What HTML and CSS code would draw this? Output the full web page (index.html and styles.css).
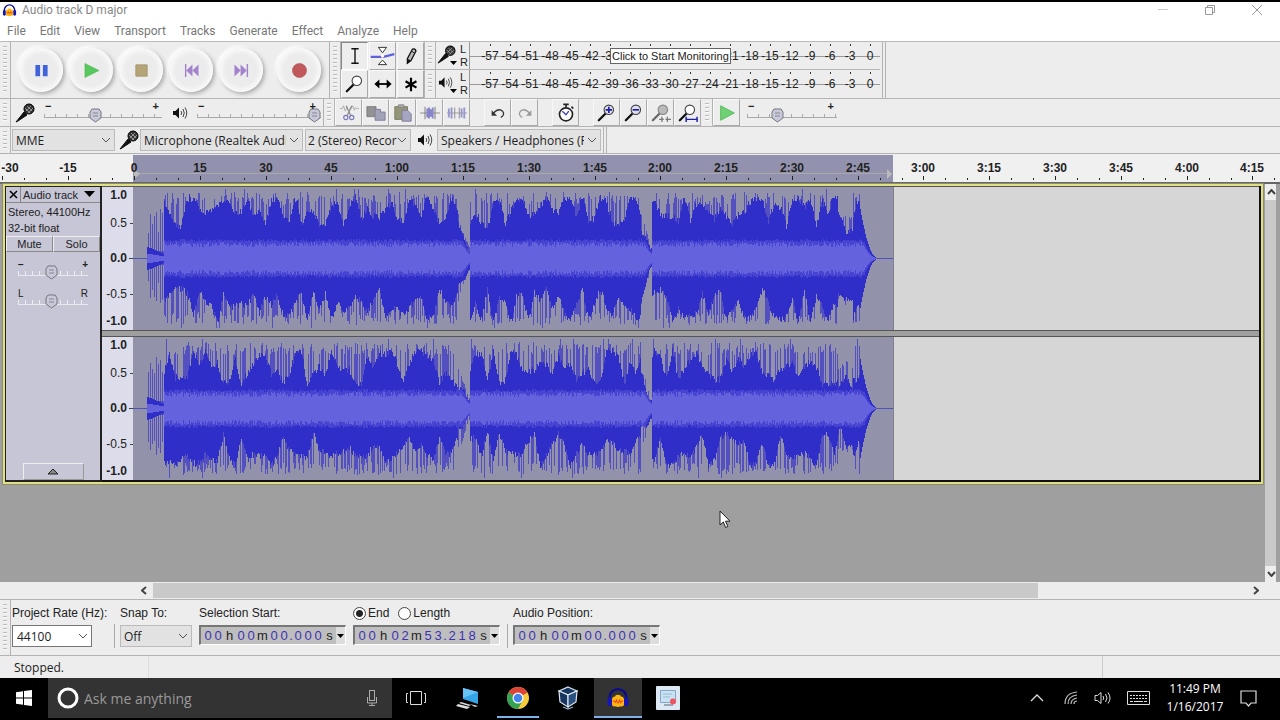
FILE: index.html
```html
<!DOCTYPE html>
<html lang="en">
<head>
    <meta charset="UTF-8">
    <meta name="viewport" content="width=device-width, initial-scale=1.0">
    <title>Audio track D major</title>
    <link rel="stylesheet" href="styles.css">
</head>
<body>
    <svg class="sprite" aria-hidden="true">
        <symbol id="mic" viewBox="0 0 20 20">
            <path d="M1 19 L9 9 L12 12 L3 18 Z" fill="#111" stroke="#111"/>
            <circle cx="14" cy="6" r="5" fill="#333" stroke="#000"/>
            <path d="M10 5l5 5M12 3l5 5M11 8l5-5M13 10l5-5" stroke="#aaa" stroke-width="0.8"/>
        </symbol>
        <symbol id="speaker" viewBox="0 0 16 16">
            <path d="M1 6h2.500l3.500-3.500v11L3.500 10H1z" fill="#111"/>
            <path d="M9 6q1.500 2 0 4M11 4q2.500 4 0 8M13 2.500q3.500 5.500 0 11" fill="none" stroke="#444"/>
        </symbol>
        <symbol id="lens" viewBox="0 0 22 22">
            <path d="M2 19l8-8" stroke="#111" stroke-width="2.500" stroke-linecap="round"/>
            <circle cx="13" cy="7.500" r="5.200" stroke="#444" stroke-width="1.200"/>
        </symbol>
        <symbol id="logo" viewBox="0 0 32 32">
            <path d="M5 20V15a11 11 0 0 1 22 0v5" fill="none" stroke="#0b0b8c" stroke-width="3"/>
            <path d="M8 25V17q1-3 4-3 1-3 4-2 3-1 4 2 3 0 4 3v8q-1 3-4 2-4 2-8 0-3 1-4-2z" fill="#fdb515"/>
            <path d="M8 20l3-1 1 2 2-4 2 5 2-5 2 4 1-2 3 1-3 1-1 3-2-3-2 3-2-3-2 2-1-2z" fill="#ef4a1a"/>
            <rect x="2" y="15" width="6" height="12" rx="3" fill="#1616b4"/>
            <rect x="24" y="15" width="6" height="12" rx="3" fill="#1616b4"/>
        </symbol>
    </svg>

    <div class="window">
        <header class="titlebar">
            <svg class="app-icon"><use href="#logo"/></svg>
            <h1>Audio track D major</h1>
            <div class="window-buttons">
                <button aria-label="Minimize"><svg width="12" height="12"><path d="M1 5.500h10" stroke="#ccc"/></svg></button>
                <button aria-label="Restore"><svg width="12" height="12" fill="none" stroke="#999"><path d="M1.500 3.500h7v7h-7zM3.500 3.500v-2h7v7h-2"/></svg></button>
                <button aria-label="Close"><svg width="12" height="12"><path d="M1 1l10 10M11 1L1 11" stroke="#999"/></svg></button>
            </div>
        </header>

        <nav class="menubar">
            <a href="#">File</a>
            <a href="#">Edit</a>
            <a href="#">View</a>
            <a href="#">Transport</a>
            <a href="#">Tracks</a>
            <a href="#">Generate</a>
            <a href="#">Effect</a>
            <a href="#">Analyze</a>
            <a href="#">Help</a>
        </nav>

        <!-- transport, tools, meters -->
        <div class="toolbar-row">
            <div class="grip"></div>
            <div class="transport">
                <button class="round" aria-label="Pause"><svg viewBox="0 0 16 16"><path d="M1.500 2h5v12h-5zM9.500 2h5v12h-5z" fill="#3f62dd"/></svg></button>
                <button class="round" aria-label="Play"><svg viewBox="0 0 16 16"><path d="M1 0.500l15 7.500-15 7.500z" fill="#57c95c" stroke="#46a84b" stroke-width="0.500"/></svg></button>
                <button class="round" aria-label="Stop"><svg viewBox="0 0 16 16"><path d="M2 2h12v12H2z" fill="#b5a476" stroke="#a3946c"/></svg></button>
                <button class="round" aria-label="Skip to start"><svg viewBox="0 0 16 16"><path d="M1 1h1.500v14H1zM9 1.500v13L2.500 8zM15.500 1.500v13L9 8z" fill="#a283cc"/></svg></button>
                <button class="round" aria-label="Skip to end"><svg viewBox="0 0 16 16"><path d="M13.500 1H15v14h-1.500zM0.500 1.500v13L7 8zM7 1.500v13L13.500 8z" fill="#a283cc"/></svg></button>
                <button class="round record" aria-label="Record"><svg viewBox="0 0 16 16"><circle cx="8" cy="8" r="7.500" fill="#c1595c" stroke="#a94a4e" stroke-width="0.600"/></svg></button>
            </div>
            <div class="grip"></div>
            <div class="tools">
                <button class="cell pressed" aria-label="Selection tool"><svg viewBox="0 0 22 22"><path d="M7 3h8M7 19h8M11 3v16" stroke="#111" stroke-width="1.500"/></svg></button>
                <button class="cell" aria-label="Envelope tool"><svg class="wide" viewBox="0 0 26 22"><path d="M0 12h14l12-3" fill="none" stroke="#6060dd" stroke-width="2.600"/><path d="M8.500 1.500h9L13 7.500zM8.500 20.500h9L13 15.500z" fill="#fff" stroke="#222"/><circle cx="13" cy="11" r="1.800" fill="#fff"/></svg></button>
                <button class="cell" aria-label="Draw tool"><svg viewBox="0 0 22 22"><path d="M7 19v-5L12.500 3.500q3-1 4 2L11 16z" fill="#bbb" stroke="#111" stroke-width="1.400"/><path d="M7 19l1-4 2 1zM12 6l3 2" fill="#111" stroke="#111"/></svg></button>
                <button class="cell" aria-label="Zoom tool"><svg viewBox="0 0 22 22" fill="#fff"><use href="#lens"/></svg></button>
                <button class="cell" aria-label="Time shift tool"><svg viewBox="0 0 22 22"><path d="M5 11h12" stroke="#000" stroke-width="2"/><path d="M7 6v10l-5.500-5zM15 6v10l5.500-5z"/></svg></button>
                <button class="cell" aria-label="Multi tool"><svg viewBox="0 0 22 22"><path d="M11 4v15M5 8l12 7M17 8L5 15" stroke="#000" stroke-width="2.400"/></svg></button>
            </div>
            <div class="meters">
                <div class="meter">
                    <div class="grip"></div>
                    <button class="meter-icon" aria-label="Record meter"><svg width="22" height="22"><use href="#mic" width="19" height="19"/><path d="M13 16h7l-3.500 4z"/></svg></button>
                    <div class="lr"><span>L</span><span>R</span></div>
                    <div class="scale" data-covered="-36 -33 -30 -27 -24"></div>
                    <div class="tooltip">Click to Start Monitoring</div>
                </div>
                <div class="meter">
                    <div class="grip"></div>
                    <button class="meter-icon" aria-label="Playback meter"><svg width="22" height="22"><use href="#speaker" x="1" y="2" width="15" height="15"/><path d="M13 16h7l-3.500 4z"/></svg></button>
                    <div class="lr"><span>L</span><span>R</span></div>
                    <div class="scale"></div>
                </div>
            </div>
            <div class="row-end"></div>
        </div>

        <!-- mixer, edit, transcription -->
        <div class="toolbar-row">
            <div class="grip"></div>
            <div class="mixer">
                <svg class="device-icon" width="20" height="20"><use href="#mic"/></svg>
                <div class="slider">
                    <input type="range" aria-label="Recording volume" min="0" max="100" value="43">
                </div>
                <svg class="device-icon" width="16" height="16"><use href="#speaker"/></svg>
                <div class="slider playback">
                    <input type="range" aria-label="Playback volume" min="0" max="100" value="100">
                </div>
            </div>
            <div class="grip"></div>
            <div class="cells">
                <button class="cell" aria-label="Cut"><svg viewBox="0 0 22 22"><path d="M1 6h3l1-3 2 6 2-5M13 7l2-4 2 5 1-3 1 1h3" fill="none" stroke="#aaa"/><path d="M8 3l5 11M14 3L9 14" stroke="#888" stroke-width="1.300"/><circle cx="7.500" cy="16" r="2.300" fill="none" stroke="#7878c0" stroke-width="1.300"/><circle cx="14" cy="16" r="2.300" fill="none" stroke="#7878c0" stroke-width="1.300"/></svg></button>
                <button class="cell" aria-label="Copy"><svg viewBox="0 0 22 22"><path d="M1 4h10v11H1z" fill="#929292" stroke="#7c7c7c"/><path d="M10 7h6v3h5v9H10z" fill="#a2a2ba" stroke="#7d7d98"/></svg></button>
                <button class="cell" aria-label="Paste"><svg viewBox="0 0 22 22"><path d="M2 4h14v14H2z" fill="#95957a" stroke="#77775c"/><path d="M6 2h6v3H6z" fill="#aaa" stroke="#888"/><path d="M10 8h6l4 4v8H10z" fill="#a6a6c2" stroke="#7d7d98"/></svg></button>
                <button class="cell" aria-label="Trim"><svg viewBox="0 0 22 22"><path d="M0 11h22" stroke="#888"/><path d="M5 4h1v14H5zM16 4h1v14h-1z" fill="#777"/><path d="M7 6h2v-1h2v2h2v-2h2v12h-2v-2h-2v2H9v-1H7z" fill="#8686c8"/></svg></button>
                <button class="cell" aria-label="Silence"><svg viewBox="0 0 22 22"><path d="M0 11h22" stroke="#999"/><path d="M1 6h2v10H1zM4 5h2v12H4zM15 6h2v10h-2zM18 5h2v12h-2z" fill="#9696cc"/><path d="M8.500 5v12M13.500 5v12" stroke="#888"/></svg></button>
            </div>
            <div class="cells">
                <button class="cell" aria-label="Undo"><svg viewBox="0 0 22 22"><path d="M6 11q6-6 10-2 3 4-2 7" fill="none" stroke="#333" stroke-width="1.400"/><path d="M4 8v6h6z" fill="#333"/></svg></button>
                <button class="cell" aria-label="Redo"><svg viewBox="0 0 22 22"><path d="M16 11q-6-6-10-2-3 4 2 7" fill="none" stroke="#999" stroke-width="1.400"/><path d="M18 8v6h-6z" fill="#999"/></svg></button>
            </div>
            <div class="cells">
                <button class="cell" aria-label="Sync lock"><svg viewBox="0 0 22 22"><circle cx="11" cy="12.500" r="7.200" fill="#fff" stroke="#222" stroke-width="1.800"/><path d="M11 5V1M8 1.500h6M17 4l2 2" stroke="#222" stroke-width="1.800"/><path d="M7 9l4 4 3-4" fill="none" stroke="#4040c0" stroke-width="1.500"/></svg></button>
            </div>
            <div class="cells">
                <button class="cell" aria-label="Zoom in"><svg viewBox="0 0 22 22" fill="#dde"><use href="#lens"/><path d="M13 4v7M9.500 7.500h7" stroke="#1c1ca0" stroke-width="1.800"/></svg></button>
                <button class="cell" aria-label="Zoom out"><svg viewBox="0 0 22 22" fill="#dde"><use href="#lens"/><path d="M9.500 7.500h7" stroke="#1c1ca0" stroke-width="1.800"/></svg></button>
                <button class="cell" aria-label="Fit selection"><svg viewBox="0 0 22 22"><g fill="#999" opacity="0.600"><use href="#lens"/></g><path d="M9 18h5M16 18h6M12 15v6M18 15v6" stroke="#777" stroke-width="1.400"/></svg></button>
                <button class="cell" aria-label="Fit project"><svg viewBox="0 0 22 22" fill="#fff"><use href="#lens"/><path d="M9 18h12M9 15v6M21 15v6" stroke="#1c1ca0" stroke-width="1.600"/></svg></button>
            </div>
            <div class="grip"></div>
            <div class="cells">
                <button class="cell" aria-label="Play at speed"><svg viewBox="0 0 22 22"><path d="M4 3l15 8-15 8z" fill="#6fd074" stroke="#57b95c"/></svg></button>
            </div>
            <div class="slider speed">
                <input type="range" aria-label="Playback speed" min="0" max="100" value="31">
            </div>
        </div>

        <!-- devices -->
        <div class="toolbar-row devices">
            <div class="grip"></div>
            <select class="host" aria-label="Audio host"><option>MME</option></select>
            <svg width="20" height="20"><use href="#mic"/></svg>
            <select class="input-device" aria-label="Recording device"><option>Microphone (Realtek Audio)</option></select>
            <select class="channels" aria-label="Recording channels"><option>2 (Stereo) Recor</option></select>
            <svg class="out-icon" width="16" height="16"><use href="#speaker"/></svg>
            <select class="output-device" aria-label="Playback device"><option>Speakers / Headphones (Realtek)</option></select>
            <div class="row-end"></div>
        </div>

        <svg class="timeline" id="timeline"></svg>

        <main class="workspace">
            <section class="tracks">
                <div class="track">
                    <div class="track-info">
                        <div class="track-title">
                            <button class="close-track" aria-label="Close track"><svg width="9" height="9"><path d="M1 1l7 7M8 1L1 8" stroke="#000" stroke-width="1.500"/></svg></button>
                            <button class="track-menu">Audio track <svg width="11" height="7"><path d="M0 0h11L5.500 6z"/></svg></button>
                        </div>
                        <p>Stereo, 44100Hz<br>32-bit float</p>
                        <div class="mute-solo">
                            <button>Mute</button>
                            <button>Solo</button>
                        </div>
                        <div class="knob">
                            <div><b>−</b><b>+</b></div>
                            <input type="range" aria-label="Gain" value="47">
                        </div>
                        <div class="knob">
                            <div><span>L</span><span>R</span></div>
                            <input type="range" aria-label="Pan" value="47">
                        </div>
                        <button class="collapse" aria-label="Collapse track"><svg width="12" height="7"><path d="M1 6l5-5 5 5z" fill="#888" stroke="#222"/></svg></button>
                    </div>
                    <div class="channel-list">
                        <div class="channel">
                            <div class="levels"><b>1.0</b><span>0.5</span><b>0.0</b><span>-0.5</span><b>-1.0</b></div>
                            <svg class="wave" viewBox="0 0 761 143" preserveAspectRatio="none"></svg>
                        </div>
                        <div class="channel">
                            <div class="levels"><b>1.0</b><span>0.5</span><b>0.0</b><span>-0.5</span><b>-1.0</b></div>
                            <svg class="wave" viewBox="0 0 761 143" preserveAspectRatio="none"></svg>
                        </div>
                    </div>
                </div>
            </section>
            <div class="vscroll">
                <button aria-label="Scroll up"><svg width="9" height="6"><path d="M1 5l3.500-4L8 5" fill="none" stroke="#444" stroke-width="2"/></svg></button>
                <div class="thumb"></div>
                <button aria-label="Scroll down"><svg width="9" height="6"><path d="M1 1l3.500 4L8 1" fill="none" stroke="#444" stroke-width="2"/></svg></button>
            </div>
        </main>

        <div class="hscroll">
            <button aria-label="Scroll left"><svg width="6" height="9"><path d="M5 1L1 4.500 5 8" fill="none" stroke="#444" stroke-width="2"/></svg></button>
            <div class="thumb"></div>
            <button class="right" aria-label="Scroll right"><svg width="6" height="9"><path d="M1 1l4 3.500L1 8" fill="none" stroke="#444" stroke-width="2"/></svg></button>
        </div>

        <div class="selection-bar">
            <div class="grip"></div>
            <div class="field rate">
                <label for="rate">Project Rate (Hz):</label>
                <select id="rate"><option>44100</option></select>
            </div>
            <div class="divider"></div>
            <div class="field snap">
                <label for="snap">Snap To:</label>
                <select id="snap"><option>Off</option></select>
            </div>
            <div class="field">
                <span>Selection Start:</span>
                <div class="time" data-time="00h00m00.000s"></div>
            </div>
            <div class="field end">
                <div class="radios">
                    <label><input type="radio" name="range" checked>End</label>
                    <label><input type="radio" name="range">Length</label>
                </div>
                <div class="time" data-time="00h02m53.218s"></div>
            </div>
            <div class="divider"></div>
            <div class="field">
                <span>Audio Position:</span>
                <div class="time" data-time="00h00m00.000s"></div>
            </div>
        </div>

        <footer class="statusbar">
            <span class="state">Stopped.</span>
            <span class="message"></span>
            <span class="rate-info"></span>
        </footer>
    </div>

    <div class="taskbar">
        <button class="start" aria-label="Start"><svg width="16" height="16" fill="#fff"><path d="M0 2.300L7 1.300V7.600H0zM8 1.100L16 0V7.600H8zM0 8.500H7V14.800L0 13.800zM8 8.500H16V16L8 14.900z"/></svg></button>
        <div class="search">
            <svg width="22" height="22"><circle cx="11" cy="11" r="9" fill="none" stroke="#fff" stroke-width="3"/></svg>
            <input type="text" aria-label="Search" placeholder="Ask me anything">
            <svg width="12" height="18" fill="none" stroke="#aaa"><rect x="3.500" y="1.500" width="5" height="10"/><path d="M1.500 8v6h9V8M6 14v3M3 16.500h6"/></svg>
        </div>
        <button class="task view" aria-label="Task view"><svg width="22" height="16" fill="none" stroke="#ddd"><path d="M5.500 1.500h11v13h-11zM3 3.500H1.500v9H3M19 3.500h1.500v9H19"/></svg></button>
        <button class="task" aria-label="Remote desktop"><svg width="24" height="24"><path d="M7 2l15 4v12L7 13z" fill="#35a5e8"/><path d="M7 2l15 4-15 6z" fill="#67c2f5"/><path d="M5 16l10 3-2 1-10-3zM2 18l12 3-3 2-11-3zM14 18l8 2-3 1z" fill="#ddd"/></svg></button>
        <button class="task running" aria-label="Chrome"><svg width="24" height="24" viewBox="0 0 24 24"><circle cx="12" cy="12" r="11" fill="#f8cb3c"/><path d="M12 12L2.500 6.500A11 11 0 0 1 21.500 6.500z" fill="#dc4437"/><path d="M12 12L2.500 6.500A11 11 0 0 0 12 23l5-9z" fill="#31a353"/><circle cx="12" cy="12" r="5.500" fill="#fff"/><circle cx="12" cy="12" r="4.300" fill="#4385f0"/></svg></button>
        <button class="task" aria-label="VirtualBox"><svg width="24" height="24" stroke="#dfe8f2" stroke-width="1.200"><path d="M12 1l9 4-9 4-9-4z" fill="#16355f"/><path d="M3 5l9 4v12l-8-5z" fill="#16355f"/><path d="M21 5l-9 4v12l8-5z" fill="#284f7e"/><path d="M7 21l5 2 5-2" fill="none" stroke="#8faed0"/></svg></button>
        <button class="task active" aria-label="Audacity"><svg width="24" height="24"><use href="#logo"/></svg></button>
        <button class="task" aria-label="Screen recorder"><svg width="24" height="24"><rect width="24" height="24" rx="1" fill="#dce8f3"/><path d="M4.500 4.500h15v12h-15z" fill="#c7e2f4" stroke="#87a6bd"/><path d="M7 8h9M7 11h7" stroke="#9ab8cc"/><path d="M8 19h9" stroke="#567"/><circle cx="17" cy="15.500" r="3" fill="#ef5361"/></svg></button>
        <div class="tray">
            <button class="more" aria-label="Show hidden icons"><svg width="14" height="8"><path d="M1 7l6-6 6 6" fill="none" stroke="#ddd" stroke-width="1.300"/></svg></button>
            <button aria-label="Network"><svg width="14" height="14" fill="none" stroke="#bbb" stroke-width="1.200"><path d="M1 13Q1 2 13 1M4 13Q4 5 13 4M7 13Q7 8 13 7M10 13Q10 10 13 10"/></svg></button>
            <button aria-label="Volume"><svg width="17" height="14" fill="none" stroke="#ddd"><path d="M1 4.500h2.500L7 1.500v11L3.500 9.500H1zM9 5q1.500 2 0 4M11.500 3q3 4 0 8M14 1.500q4 5.500 0 11"/></svg></button>
            <button aria-label="Touch keyboard"><svg width="23" height="14" fill="none" stroke="#ddd"><path d="M0.500 0.500h22v13h-22z"/><path d="M3 4.500h17M3 7.500h17" stroke-dasharray="2 1"/><path d="M3 10.500h3M7 10.500h9M17 10.500h3"/></svg></button>
            <div class="clock"><span>11:49 PM</span><span>1/16/2017</span></div>
            <button aria-label="Notifications"><svg width="17" height="17" fill="none" stroke="#ddd" stroke-width="1.200"><path d="M1 1h15v12h-5l-2.500 3L6 13H1z"/></svg></button>
        </div>
    </div>

    <svg class="cursor" width="13" height="19"><path d="M1 1v14l3.300-3 2.300 5.500 2.200-1-2.300-5.300H11z" fill="#fff" stroke="#222"/></svg>

    <script src="app.js"></script>
</body>
</html>
```
FILE: styles.css
```css
* {
    box-sizing: border-box;
}

body {
    margin: 0;
    height: 100vh;
    display: flex;
    flex-direction: column;
    overflow: hidden;
    background: #000;
    padding-top: 2px;
    font-family: 'Open Sans', 'Noto Sans', sans-serif;
    font-size: 12px;
    color: #222;
}

button {
    display: flex;
    align-items: center;
    justify-content: center;
    padding: 0;
    border: 0;
    background: none;
    color: inherit;
    font: inherit;
}

.sprite {
    display: none;
}

.window {
    flex: 1;
    display: flex;
    flex-direction: column;
    min-height: 0;
    background: #ededed;
}

/* title and menu */
.titlebar {
    display: flex;
    align-items: center;
    gap: 5px;
    height: 16px;
    padding-left: 2px;
    background: #fff;
}

.titlebar h1 {
    margin: 0;
    font: 12px Roboto, sans-serif;
    color: #888;
}

.app-icon {
    width: 15px;
    height: 15px;
}

.window-buttons {
    display: flex;
    gap: 35px;
    margin-left: auto;
    padding-right: 17px;
}

.menubar {
    display: flex;
    gap: 14px;
    height: 24px;
    padding: 2px 7px 0;
    font: 12px/22px Roboto, sans-serif;
    background: #fff;
    border-bottom: 1px solid #bbb;
}

.menubar a {
    color: #777;
    text-decoration: none;
}

/* toolbars */
.toolbar-row {
    display: flex;
    border-bottom: 1px solid #b4b4b4;
}

.grip {
    flex: none;
    width: 11px;
    border-right: 1px solid #b4b4b4;
    background: repeating-linear-gradient(#bbb 0 1px, #f8f8f8 1px 2px, #ededed 2px 4px) content-box;
    padding: 4px 3px 4px 3px;
}

.transport {
    display: flex;
    align-items: center;
    gap: 6px;
    width: 319px;
    padding-left: 8px;
    border-right: 1px solid #b4b4b4;
}

.round {
    width: 44px;
    height: 44px;
    border-radius: 50%;
    background: radial-gradient(#ececec 50%, #f8f8f8 68%);
    box-shadow: 2px 2px 4px #aaa, -2px -2px 3px #fff;
}

.round svg {
    width: 15px;
    height: 15px;
}

.record {
    margin-left: 8px;
}

.tools {
    display: grid;
    grid-template-columns: repeat(3, 27px);
    column-gap: 1px;
}

.cells {
    display: flex;
    margin-right: 14px;
}

.cells + .grip {
    margin-left: -13px;
}

.cell {
    width: 27px;
    height: 27px;
    border: 1px solid #aaa;
    border-top-color: #f8f8f8;
    border-left-color: #f8f8f8;
}

.tools .cell {
    height: 28px;
}

.cell.pressed {
    border-color: #888 #fff #fff #888;
}

.cell svg {
    width: 20px;
    height: 20px;
}

.cell .wide {
    width: 25px;
}

.meters {
    border-left: 1px solid #b4b4b4;
}

.meter {
    position: relative;
    display: flex;
    height: 28px;
    border-bottom: 1px solid #b4b4b4;
}

.meter:last-child {
    border-bottom: 0;
}

.meter-icon {
    width: 24px;
}

.lr {
    display: flex;
    flex-direction: column;
    justify-content: center;
    width: 9px;
    font: 11px/13px 'Liberation Sans', sans-serif;
}

.scale {
    display: flex;
    padding-left: 10px;
    border-left: 1px solid #999;
    font: 12px/28px 'Liberation Sans', sans-serif;
    background: linear-gradient(#999, #999) 0 14px / 100% 1px no-repeat;
}

.scale span {
    width: 20px;
    text-align: center;
    background: linear-gradient(#333, #333) 50% 2px / 1px 2px no-repeat;
}

.tooltip {
    position: absolute;
    left: 185px;
    top: 6px;
    padding: 0 1px;
    border: 1px solid #666;
    background: #fff;
    font: 11px/14px 'Liberation Sans', sans-serif;
    white-space: nowrap;
}

.row-end {
    width: 4px;
    margin-left: 2px;
    border: 1px solid #b4b4b4;
    border-width: 0 1px;
}

.mixer {
    display: flex;
    align-items: center;
    width: 313px;
    padding-left: 4px;
    border-right: 1px solid #b4b4b4;
}

.slider {
    position: relative;
    width: 118px;
    margin: 5px 0 0 9px;
}

.device-icon + .slider {
    margin-right: 10px;
}

.device-icon + .playback {
    width: 124px;
    margin-right: 0;
}

.slider::before,
.slider::after {
    position: absolute;
    top: -6px;
    left: 1px;
    font: bold 11px/10px 'Liberation Sans', sans-serif;
    content: '−';
}

.slider::after {
    left: auto;
    right: 3px;
    content: '+';
}

.playback::after {
    right: 5px;
}

.speed {
    width: 90px;
    margin-left: -7px;
    align-self: center;
}

input[type="range"] {
    display: block;
    appearance: none;
    width: 100%;
    height: 17px;
    margin: 0;
    background:
        linear-gradient(#aaa, #aaa) 0 10px / 100% 1px no-repeat,
        repeating-linear-gradient(90deg, #aaa 0 1px, transparent 1px 11px) 0 7px / 100% 3px no-repeat;
}

input[type="range"]::-webkit-slider-thumb {
    appearance: none;
    width: 13px;
    height: 15px;
    background: url("data:image/svg+xml,%3Csvg xmlns='http://www.w3.org/2000/svg' width='13' height='15'%3E%3Cpath d='M3 1h7l2 3v6l-5.500 4L1 10V4z' fill='%23c8c8dc' stroke='%23777'/%3E%3Cpath d='M4 5h5M4 8h5' stroke='%23888'/%3E%3C/svg%3E");
}

.devices {
    align-items: center;
    height: 27px;
}

.devices .grip,
.devices .row-end {
    align-self: stretch;
}

select {
    appearance: none;
    height: 22px;
    padding: 0 16px 0 3px;
    border: 1px solid #bbb;
    border-radius: 0;
    color: #222;
    font: 12px 'Open Sans', 'Noto Sans', sans-serif;
    background: #e2e2e2 url("data:image/svg+xml,%3Csvg xmlns='http://www.w3.org/2000/svg' width='10' height='6'%3E%3Cpath d='M1 1l4 4 4-4' fill='none' stroke='%23555'/%3E%3C/svg%3E") right 3px center no-repeat;
}

.host {
    width: 103px;
    margin: 0 4px 0 1px;
}

.input-device {
    width: 163px;
    margin: 0 2px 0 1px;
}

.channels {
    width: 106px;
    margin-right: 6px;
    padding: 0 12px 0 2px;
}

.output-device {
    width: 164px;
    margin-left: 4px;
}

/* timeline */
.timeline {
    display: block;
    flex: none;
    width: 100%;
    height: 27px;
    margin-top: 1px;
    font: bold 12px 'Liberation Sans', sans-serif;
    background: #f0f0f0;
}

/* tracks */
.workspace {
    flex: 1;
    display: flex;
    min-height: 0;
    border-top: 2px solid #666;
    padding-right: 4px;
    background: #9f9f9f;
}

.tracks {
    flex: 1;
    padding: 0 2px 0 3px;
}

.track {
    display: flex;
    border: 2px solid #dfdf84;
    outline: 1px solid #8d8d70;
    background: #c6c6d6;
}

.track-info {
    display: flex;
    flex-direction: column;
    width: 97px;
    border: solid #222;
    border-width: 1px 2px 2px 1px;
    font: 11px/16px 'Liberation Sans', sans-serif;
}

.track-title {
    display: flex;
    border-bottom: 1px solid #888;
}

.close-track {
    width: 15px;
    border-right: 1px solid #888;
}

.track-menu {
    gap: 6px;
    height: 15px;
    padding-left: 2px;
}

.track-info p {
    margin: 1px 0 0 2px;
}

.mute-solo {
    display: grid;
    grid-template-columns: 1fr 1fr;
}

.mute-solo button {
    height: 16px;
    border: 1px solid #888;
    border-top-color: #eee;
    border-left-color: #eee;
}

.knob {
    padding: 2px 12px 0 12px;
    margin-top: 6px;
}

.knob div {
    display: flex;
    justify-content: space-between;
    font-size: 10px;
    line-height: 10px;
}

.knob input {
    margin-top: -6px;
    background:
        linear-gradient(#e8e8f0, #e8e8f0) 0 11px / 100% 1px no-repeat,
        repeating-linear-gradient(90deg, #eee 0 1px, transparent 1px 7px) 0 7px / 100% 4px no-repeat;
}

.collapse {
    width: 61px;
    height: 17px;
    margin: auto auto 0;
    border: 1px solid #999;
    border-top-color: #eee;
    border-left-color: #eee;
}

.channel-list {
    flex: 1;
    display: flex;
    flex-direction: column;
    gap: 5px;
    border: solid #111;
    border-width: 0 2px 2px 0;
    background: #9f9f9f;
}

.channel {
    display: flex;
    height: 145px;
    border: solid #555;
    border-width: 1px 0;
    background: #d6d6d6;
}

.channel:last-child {
    height: 144px;
    border-bottom: 0;
}

.levels {
    display: grid;
    grid-template-rows: 15fr 42fr 28fr 44fr 10fr;
    align-items: center;
    width: 31px;
    padding: 0 6px 4px 0;
    text-align: right;
    font: 12px/10px 'Liberation Sans', sans-serif;
    background:
        linear-gradient(#444, #444) 100% 36px / 3px 1px no-repeat,
        linear-gradient(#444, #444) 100% 71px / 4px 1px no-repeat,
        linear-gradient(#444, #444) 100% 107px / 3px 1px no-repeat,
        #dcdcea;
}

.wave {
    width: 761px;
    height: 143px;
    border-right: 1px solid #808090;
    background: #9292aa;
    shape-rendering: crispEdges;
}

/* scrollbars */
.vscroll {
    display: flex;
    flex-direction: column;
    width: 11px;
    background: #ededed;
}

.vscroll button {
    height: 16px;
    width: 11px;
    padding-left: 2px;
}

.thumb {
    flex: 1;
    background: #c9c9c9;
}

.hscroll {
    display: flex;
    height: 18px;
    padding: 1px 4px 1px 135px;
    border-bottom: 1px solid #b4b4b4;
}

.hscroll button {
    width: 18px;
}

.hscroll .thumb {
    flex: 0 1 885px;
}

.hscroll .right {
    margin-left: auto;
    margin-right: 11px;
}

/* selection */
.selection-bar {
    display: flex;
    height: 56px;
    border-bottom: 1px solid #b4b4b4;
    font: 12px 'Liberation Sans', sans-serif;
}

.field {
    display: flex;
    flex-direction: column;
    gap: 2px;
    padding-top: 3px;
    margin-right: 7px;
    line-height: 20px;
    white-space: nowrap;
}

.field > span,
.field > label,
.radios {
    height: 20px;
}

.rate {
    width: 95px;
    margin-left: 1px;
}

.rate select {
    width: 80px;
    padding-left: 4px;
    border-color: #777;
    background-color: #fff;
}

.snap {
    width: 72px;
}

.snap select {
    width: 72px;
}

.divider {
    width: 1px;
    margin: 24px 5px 7px 0;
    background: #aaa;
}

.radios {
    display: flex;
    gap: 9px;
}

.radios label {
    display: flex;
    align-items: center;
    gap: 2px;
}

.radios input {
    appearance: none;
    width: 13px;
    height: 13px;
    margin: 0;
    border: 1px solid #444;
    border-radius: 50%;
    background: #fff;
}

.radios input:checked {
    background: radial-gradient(#222 0 3px, #fff 4px);
}

.time {
    display: flex;
    height: 20px;
    padding-left: 2px;
    border: 1px solid #777;
    border-width: 2px 1px 1px 2px;
    border-right-color: #fff;
    border-bottom-color: #fff;
    background: #bebebe;
    font-size: 13px;
    line-height: 17px;
}

.time span {
    width: 10px;
    text-align: center;
    color: #3c32b4;
}

.time .unit {
    width: 13px;
    color: #222;
}

.time .dot {
    width: 4px;
}

.time button {
    width: 9px;
    background: #ddd;
}

/* status */
.statusbar {
    display: flex;
    height: 22px;
    line-height: 24px;
}

.state {
    width: 148px;
    padding-left: 14px;
}

.message {
    flex: 1;
    border-left: 1px solid #ddd;
}

.rate-info {
    width: 178px;
    border-left: 1px solid #ccc;
}

/* windows taskbar */
.taskbar {
    display: flex;
    height: 42px;
    padding-bottom: 2px;
    color: #fff;
    background: #000;
}

.start {
    width: 48px;
}

.search {
    display: flex;
    align-items: center;
    gap: 5px;
    width: 344px;
    padding: 0 14px 0 9px;
    background: #333;
}

.search input {
    flex: 1;
    min-width: 0;
    padding: 0;
    border: 0;
    background: none;
    font: 14px 'Open Sans', 'Noto Sans', sans-serif;
}

.search input::placeholder {
    color: #999;
}

.task {
    width: 48px;
    margin-right: 2px;
    border-bottom: 2px solid transparent;
    padding-top: 2px;
}

.task.view {
    margin-right: 4px;
}

.task.running {
    width: 42px;
    margin: 0 5px 0 3px;
    border-color: #7fb2ea;
}

.task.active {
    background: #333;
    border-color: #7fb2ea;
}

.tray {
    display: flex;
    align-items: center;
    gap: 16px;
    margin-left: auto;
    padding-right: 23px;
}

.more {
    margin-right: 4px;
}

.clock {
    display: flex;
    flex-direction: column;
    width: 58px;
    line-height: 18px;
    text-align: center;
}

.cursor {
    position: absolute;
    left: 719px;
    top: 510px;
}
```
FILE: app.js
```js
// meter scales
document.querySelectorAll('.scale').forEach(scale => {
    const covered = (scale.dataset.covered || '').split(' ').map(Number);
    for (let db = -57; db <= 0; db += 3) {
        const mark = document.createElement('span');
        mark.textContent = db !== 0 && covered.includes(db) ? '' : db;
        scale.appendChild(mark);
    }
});

// time fields
document.querySelectorAll('.time').forEach(field => {
    [...field.dataset.time].forEach(ch => {
        const cell = document.createElement('span');
        cell.textContent = ch;
        if (/[hms]/.test(ch)) cell.className = 'unit';
        if (ch === '.') cell.className = 'dot';
        field.appendChild(cell);
    });
    const button = document.createElement('button');
    button.setAttribute('aria-label', 'Time format');
    button.innerHTML = '<svg width="7" height="4"><path d="M0 0h7L3.500 4z"/></svg>';
    field.appendChild(button);
});

// timeline ruler
const PX_PER_SEC = 4.386;
const ZERO = 134;

function formatTime(s) {
    if (Math.abs(s) < 60) return String(s);
    return Math.floor(s / 60) + ':' + String(s % 60).padStart(2, '0');
}

let ruler = '<rect x="133" width="760" height="27" fill="#9292ae"/>' +
    '<path d="M134 18.500H892" stroke="#aaa"/>' +
    '<path d="M134 14v10l6-5zM887 14v10l5-5z" fill="#bbb"/>';
for (let s = -30; s <= 260; s += 5) {
    const x = Math.round(ZERO + s * PX_PER_SEC);
    const major = s % 15 === 0;
    ruler += `<rect x="${Math.max(x, 2)}" y="${major ? 21 : 23}" width="1" height="${major ? 4 : 2}" fill="#222"/>`;
    if (major) {
        ruler += `<text x="${Math.max(x, 10)}" y="17" text-anchor="middle" fill="#222">${formatTime(s)}</text>`;
    }
}
document.getElementById('timeline').innerHTML = ruler;

// waveforms
function random(seed) {
    return () => {
        seed = (seed * 1664525 + 1013904223) % 4294967296;
        return seed / 4294967296;
    };
}

function slowNoise(rand, length, step) {
    const points = Array.from({ length: Math.ceil(length / step) + 2 }, rand);
    return x => {
        const i = Math.floor(x / step);
        const t = x / step - i;
        return points[i] + (points[i + 1] - points[i]) * t;
    };
}

// overall loudness at column x
function envelope(x) {
    if (x < 14 || x > 744) return 0;
    if (x > 324 && x < 337) return Math.max(0.18, 0.75 - (x - 324) / 20);
    if (x > 508 && x < 520) return Math.max(0.18, 0.75 - (x - 508) / 18);
    if (x > 705 && x < 721) return 0.72;
    if (x > 727) return Math.pow((745 - x) / 18, 2) * 0.85;
    return 1;
}

function drawWave(svg, seed, bodyLevel) {
    const rand = random(seed);
    const mid = 71;
    const layers = { spikes: '', body: '', fringe: '', rms: '' };
    const noise = [slowNoise(rand, 761, 6), slowNoise(rand, 761, 6)];
    const column = (x, up, down) => `M${x} ${Math.round(mid - up * 70)}h1V${Math.round(mid + 1 + down * 70)}h-1z`;

    for (let x = 14; x < 745; x++) {
        const env = envelope(x);
        if (x < 31) {
            const spike = x % 2 ? 0.3 + rand() * 0.45 : 0.1;
            const body = 0.16 - (x - 14) * 0.006;
            layers.spikes += column(x, spike, spike * 0.9);
            layers.body += column(x, body, body);
            layers.rms += column(x, body * 0.4, body * 0.4);
            continue;
        }
        const fading = x > 727;
        const body = noise.map(n => {
            if (fading) return 0.92;
            return Math.min(0.8 + rand() * 0.12, bodyLevel + n(x) * 0.52 + (rand() - 0.5) * 0.1);
        });
        const tall = rand() < 0.48;
        const spikes = body.map(b => tall && !fading ? Math.max(b, 0.76 + rand() * 0.18) : b);
        if (!fading && rand() < 0.02) spikes[0] = 0.98;
        if (!fading && rand() < 0.02) spikes[1] = 0.98;
        const fringe = Math.min(0.23 + rand() * 0.04, env * 0.5);
        const rms = Math.min(0.16 + rand() * 0.07, env * 0.35);
        layers.spikes += column(x, spikes[0] * env, spikes[1] * env);
        layers.body += column(x, body[0] * env, body[1] * env);
        layers.fringe += column(x, fringe, fringe);
        layers.rms += column(x, rms, rms);
    }

    svg.innerHTML = `<path d="M0 ${mid}h761v1H0z" fill="#5050c0"/>` +
        `<path d="${layers.spikes}" fill="#5450c0"/>` +
        `<path d="${layers.body}" fill="#302ec8"/>` +
        `<path d="${layers.fringe}" fill="#4644d0"/>` +
        `<path d="${layers.rms}" fill="#6462dc"/>`;
}

const waves = document.querySelectorAll('.wave');
drawWave(waves[0], 7, 0.42);
drawWave(waves[1], 29, 0.32);
```
